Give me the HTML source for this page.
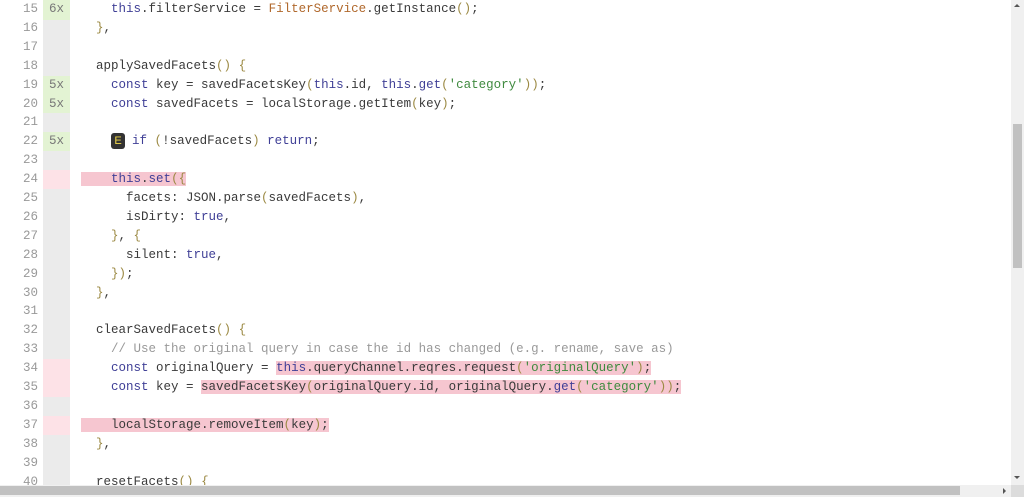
<!DOCTYPE html>
<html><head><meta charset="utf-8"><style>
body{margin:0;width:1024px;height:497px;overflow:hidden;background:#fff;position:relative;font-family:"Liberation Mono",monospace;font-size:12.5px;}
.gb{position:absolute;left:43px;top:0;width:27px;height:485px;background:#ebebeb;}
.ln{position:absolute;left:0;width:1011px;height:18.9px;line-height:18.9px;}
.n{position:absolute;left:0;width:38px;text-align:right;color:#999;}
.g{position:absolute;left:43px;top:0;width:27px;height:19.5px;color:#777;text-indent:6px;}
.g.h{background:#e3f3d3;}
.g.u{background:#fde2e7;}
.c{position:absolute;left:81px;white-space:pre;color:#3a3a3a;}
.hl{background:#f6c6d0;}
.k{color:#3f3f96}.p{color:#9c8a44}.s{color:#3f8a3f}.cm{color:#999}.t{color:#b0682c}
.e{display:inline-block;width:14px;height:16px;line-height:16px;background:#333;color:#f1d84a;border-radius:3px;text-align:center;vertical-align:middle;font-family:"Liberation Sans",sans-serif;font-size:11px;margin-right:7px;}
.vs{position:absolute;left:1011px;top:0;width:13px;height:485px;background:#f0f0f0;}
.vt{position:absolute;left:1013px;top:124px;width:9px;height:144px;background:#c1c1c1;}
.hs{position:absolute;left:0;top:485px;width:1011px;height:12px;background:#f0f0f0;}
.ht{position:absolute;left:0;top:486px;width:960px;height:9px;background:#c1c1c1;}
.cr{position:absolute;left:1011px;top:485px;width:13px;height:12px;background:#dcdcdc;}
</style></head><body>
<div class="gb"></div>
<div class="ln" style="top:0px"><span class="n">15</span><span class="g h">6x</span><span class="c">    <span class="k">this</span>.filterService = <span class="t">FilterService</span>.getInstance<span class="p">()</span>;</span></div>
<div class="ln" style="top:18.9px"><span class="n">16</span><span class="c">  <span class="p">}</span>,</span></div>
<div class="ln" style="top:37.8px"><span class="n">17</span><span class="c"></span></div>
<div class="ln" style="top:56.7px"><span class="n">18</span><span class="c">  applySavedFacets<span class="p">()</span> <span class="p">{</span></span></div>
<div class="ln" style="top:75.6px"><span class="n">19</span><span class="g h">5x</span><span class="c">    <span class="k">const</span> key = savedFacetsKey<span class="p">(</span><span class="k">this</span>.id, <span class="k">this</span>.<span class="k">get</span><span class="p">(</span><span class="s">'category'</span><span class="p">))</span>;</span></div>
<div class="ln" style="top:94.5px"><span class="n">20</span><span class="g h" style="height:18.9px">5x</span><span class="c">    <span class="k">const</span> savedFacets = localStorage.getItem<span class="p">(</span>key<span class="p">)</span>;</span></div>
<div class="ln" style="top:113.4px"><span class="n">21</span><span class="c"></span></div>
<div class="ln" style="top:132.3px"><span class="n">22</span><span class="g h" style="height:18.9px">5x</span><span class="c">    <span class="e">E</span><span class="k">if</span> <span class="p">(</span>!savedFacets<span class="p">)</span> <span class="k">return</span>;</span></div>
<div class="ln" style="top:151.2px"><span class="n">23</span><span class="c"></span></div>
<div class="ln" style="top:170.1px"><span class="n">24</span><span class="g u" style="height:18.9px"></span><span class="c"><span class="hl">    <span class="k">this</span>.<span class="k">set</span><span class="p">({</span></span></span></div>
<div class="ln" style="top:189px"><span class="n">25</span><span class="c">      facets: JSON.parse<span class="p">(</span>savedFacets<span class="p">)</span>,</span></div>
<div class="ln" style="top:207.9px"><span class="n">26</span><span class="c">      isDirty: <span class="k">true</span>,</span></div>
<div class="ln" style="top:226.8px"><span class="n">27</span><span class="c">    <span class="p">}</span>, <span class="p">{</span></span></div>
<div class="ln" style="top:245.7px"><span class="n">28</span><span class="c">      silent: <span class="k">true</span>,</span></div>
<div class="ln" style="top:264.6px"><span class="n">29</span><span class="c">    <span class="p">})</span>;</span></div>
<div class="ln" style="top:283.5px"><span class="n">30</span><span class="c">  <span class="p">}</span>,</span></div>
<div class="ln" style="top:302.4px"><span class="n">31</span><span class="c"></span></div>
<div class="ln" style="top:321.3px"><span class="n">32</span><span class="c">  clearSavedFacets<span class="p">()</span> <span class="p">{</span></span></div>
<div class="ln" style="top:340.2px"><span class="n">33</span><span class="c">    <span class="cm">// Use the original query in case the id has changed (e.g. rename, save as)</span></span></div>
<div class="ln" style="top:359.1px"><span class="n">34</span><span class="g u"></span><span class="c">    <span class="k">const</span> originalQuery = <span class="hl"><span class="k">this</span>.queryChannel.reqres.request<span class="p">(</span><span class="s">'originalQuery'</span><span class="p">)</span>;</span></span></div>
<div class="ln" style="top:378px"><span class="n">35</span><span class="g u" style="height:18.9px"></span><span class="c">    <span class="k">const</span> key = <span class="hl">savedFacetsKey<span class="p">(</span>originalQuery.id, originalQuery.<span class="k">get</span><span class="p">(</span><span class="s">'category'</span><span class="p">))</span>;</span></span></div>
<div class="ln" style="top:396.9px"><span class="n">36</span><span class="c"></span></div>
<div class="ln" style="top:415.8px"><span class="n">37</span><span class="g u" style="height:18.9px"></span><span class="c"><span class="hl">    localStorage.removeItem<span class="p">(</span>key<span class="p">)</span>;</span></span></div>
<div class="ln" style="top:434.7px"><span class="n">38</span><span class="c">  <span class="p">}</span>,</span></div>
<div class="ln" style="top:453.6px"><span class="n">39</span><span class="c"></span></div>
<div class="ln" style="top:472.5px"><span class="n">40</span><span class="c">  resetFacets<span class="p">()</span> <span class="p">{</span></span></div>
<div class="vs"></div><div class="vt"></div>
<div class="hs"></div><div class="ht"></div><div class="cr"></div>
<div style="position:absolute;left:1014px;top:4px;width:0;height:0;border-left:3px solid transparent;border-right:3px solid transparent;border-bottom:3px solid #555"></div>
<div style="position:absolute;left:1014px;top:476px;width:0;height:0;border-left:3px solid transparent;border-right:3px solid transparent;border-top:3px solid #555"></div>
<div style="position:absolute;left:1003px;top:488px;width:0;height:0;border-top:3px solid transparent;border-bottom:3px solid transparent;border-left:3px solid #555"></div>
</body></html>
